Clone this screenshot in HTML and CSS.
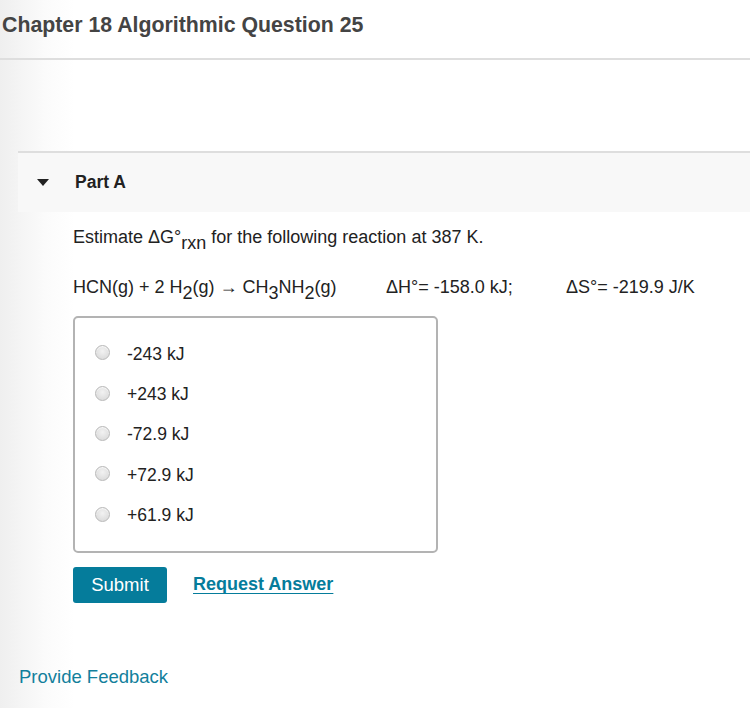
FILE: index.html
```html
<!DOCTYPE html>
<html lang="en">
<head>
    <meta charset="UTF-8">
    <title>Chapter 18 Algorithmic Question 25</title>
    <link rel="stylesheet" href="styles.css">
</head>
<body>
    <div class="page">
        <h1 class="title">Chapter 18 Algorithmic Question 25</h1>

        <div class="part">
            <div class="part-header">
                <span class="caret"></span>
                <span class="part-name">Part A</span>
            </div>

            <div class="part-body">
                <p class="question">Estimate &Delta;G&deg;<sub>rxn</sub> for the following reaction at 387 K.</p>

                <p class="reaction">
                    <span class="eq">HCN(g) + 2 H<sub>2</sub>(g) &rarr; CH<sub>3</sub>NH<sub>2</sub>(g)</span>
                    <span class="dh">&Delta;H&deg;= -158.0 kJ;</span>
                    <span class="ds">&Delta;S&deg;= -219.9 J/K</span>
                </p>

                <div class="choices">
                    <label class="choice"><span class="radio"></span>-243 kJ</label>
                    <label class="choice"><span class="radio"></span>+243 kJ</label>
                    <label class="choice"><span class="radio"></span>-72.9 kJ</label>
                    <label class="choice"><span class="radio"></span>+72.9 kJ</label>
                    <label class="choice"><span class="radio"></span>+61.9 kJ</label>
                </div>

                <div class="actions">
                    <button class="submit">Submit</button>
                    <a class="request" href="#">Request Answer</a>
                </div>
            </div>
        </div>

        <a class="feedback" href="#">Provide Feedback</a>
    </div>
</body>
</html>
```

FILE: styles.css
```css
body {
    margin: 0;
    font-family: 'Liberation Sans', Arial, sans-serif;
    color: #222;
    background: linear-gradient(to right, #efefef 0px, #fbfbfb 45px, #fff 75px);
    min-height: 708px;
}

.page {
    padding-top: 12px;
}

.title {
    margin: 0;
    padding-left: 2px;
    font-size: 21.3px;
    font-weight: bold;
    color: #444;
    line-height: 26px;
    height: 46px;
    border-bottom: 2px solid #dedede;
}

.part {
    margin-left: 18px;
    margin-top: 91px;
    border-top: 2px solid #dedede;
}

.part-header {
    display: flex;
    align-items: center;
    height: 59px;
    background-color: #f8f8f8;
}

.caret {
    width: 0;
    height: 0;
    margin-left: 19px;
    border-left: 6px solid transparent;
    border-right: 6px solid transparent;
    border-top: 7px solid #222;
}

.part-name {
    margin-left: 26px;
    font-size: 17.5px;
    font-weight: bold;
    color: #222;
}

.part-body {
    padding-left: 55px;
}

.question {
    margin: 15px 0 0;
    font-size: 18px;
    line-height: 20px;
}

.question sub,
.reaction sub {
    font-size: 18px;
    vertical-align: -6px;
    line-height: 0;
}

.reaction {
    display: flex;
    margin: 30px 0 0;
    font-size: 18px;
    line-height: 20px;
}

.eq {
    width: 313px;
}

.dh {
    width: 180px;
}

.choices {
    width: 361px;
    margin-top: 19px;
    padding: 16px 0 15px;
    border: 2px solid #b3b3b3;
    border-radius: 5px;
}

.choice {
    display: flex;
    align-items: center;
    height: 40.4px;
    padding-left: 20px;
    font-size: 17.5px;
}

.radio {
    width: 13px;
    height: 13px;
    margin-right: 17px;
    margin-top: -3px;
    border: 1px solid #b9b9b9;
    border-radius: 50%;
    background: radial-gradient(circle at 50% 40%, #f2f2f2, #d5d5d5);
    box-shadow: inset 0 1px 1px rgba(255, 255, 255, 0.8);
}

.actions {
    display: flex;
    align-items: center;
    margin-top: 14px;
}

.submit {
    width: 94px;
    height: 36px;
    border: none;
    border-radius: 3px;
    background-color: #057c9b;
    color: #fff;
    font-family: 'Liberation Sans', Arial, sans-serif;
    font-size: 18.5px;
    cursor: pointer;
}

.request {
    margin-left: 26px;
    font-size: 18px;
    font-weight: bold;
    color: #057c9b;
    text-decoration: underline;
    text-underline-offset: 3px;
}

.feedback {
    display: inline-block;
    margin-left: 19px;
    margin-top: 63px;
    font-size: 18.5px;
    color: #127f9c;
    text-decoration: none;
}
```
